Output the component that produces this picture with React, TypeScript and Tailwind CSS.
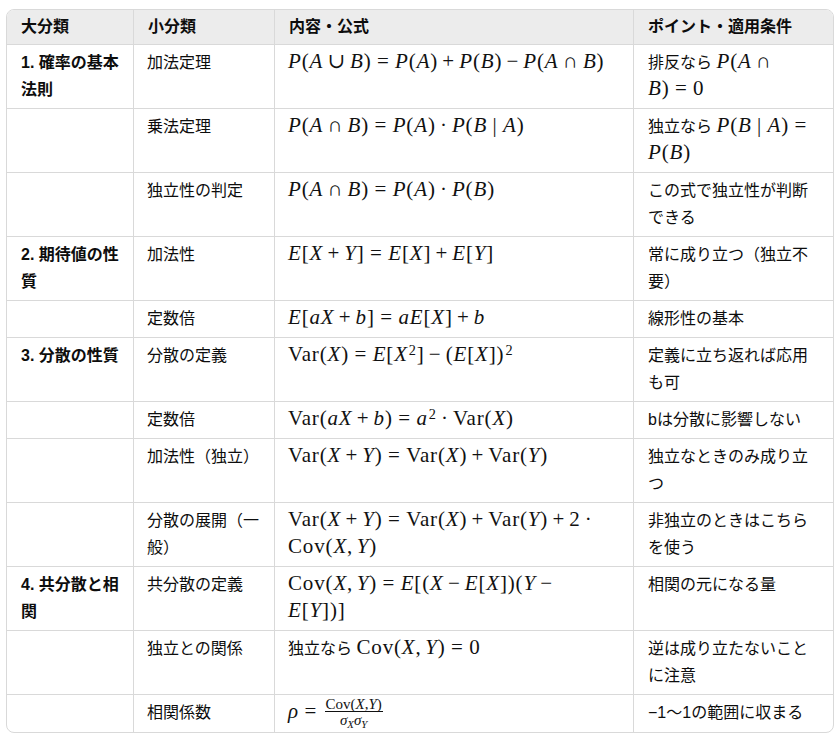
import React from "react";

const M = ({ children }: { children: React.ReactNode }) => (
  <span className="font-['Liberation_Serif','DejaVu_Serif',serif] text-[21px] tracking-[0.04em] leading-none whitespace-nowrap text-[#111]">
    {children}
  </span>
);
const V = ({ children }: { children: React.ReactNode }) => <span className="italic">{children}</span>;
const B = ({ children }: { children: React.ReactNode }) => <span className="mx-[0.2em]">{children}</span>;
const R = ({ children }: { children: React.ReactNode }) => <span className="mx-[0.26em]">{children}</span>;
const Sup = ({ children }: { children: React.ReactNode }) => (
  <sup className="text-[0.68em] ml-[1px] top-[-0.42em]">{children}</sup>
);

const P = ({ children }: { children: React.ReactNode }) => (
  <>
    <V>P</V>({children})
  </>
);
const E = ({ children }: { children: React.ReactNode }) => (
  <>
    <V>E</V>[{children}]
  </>
);
const Var = ({ children }: { children: React.ReactNode }) => <>Var({children})</>;
const Cov = () => (
  <>
    Cov(<V>X</V>,<span className="ml-[0.17em]" />
    <V>Y</V>)
  </>
);

type Row = { c1: React.ReactNode; c2: React.ReactNode; c3: React.ReactNode; c4: React.ReactNode };

const rows: Row[] = [
  {
    c1: <>1. 確率の基本法則</>,
    c2: "加法定理",
    c3: (
      <M>
        <P>
          <V>A</V>
          <B>∪</B>
          <V>B</V>
        </P>
        <R>=</R>
        <P>
          <V>A</V>
        </P>
        <B>+</B>
        <P>
          <V>B</V>
        </P>
        <B>−</B>
        <P>
          <V>A</V>
          <B>∩</B>
          <V>B</V>
        </P>
      </M>
    ),
    c4: (
      <>
        排反なら{" "}
        <M>
          <V>P</V>(<V>A</V>
          <B>∩</B>
        </M>
        <br />
        <M>
          <V>B</V>)<R>=</R>0
        </M>
      </>
    ),
  },
  {
    c1: "",
    c2: "乗法定理",
    c3: (
      <M>
        <P>
          <V>A</V>
          <B>∩</B>
          <V>B</V>
        </P>
        <R>=</R>
        <P>
          <V>A</V>
        </P>
        <B>·</B>
        <P>
          <V>B</V>
          <R>|</R>
          <V>A</V>
        </P>
      </M>
    ),
    c4: (
      <>
        独立なら{" "}
        <M>
          <P>
            <V>B</V>
            <R>|</R>
            <V>A</V>
          </P>
          <R>=</R>
        </M>
        <br />
        <M>
          <P>
            <V>B</V>
          </P>
        </M>
      </>
    ),
  },
  {
    c1: "",
    c2: "独立性の判定",
    c3: (
      <M>
        <P>
          <V>A</V>
          <B>∩</B>
          <V>B</V>
        </P>
        <R>=</R>
        <P>
          <V>A</V>
        </P>
        <B>·</B>
        <P>
          <V>B</V>
        </P>
      </M>
    ),
    c4: "この式で独立性が判断できる",
  },
  {
    c1: <>2. 期待値の性質</>,
    c2: "加法性",
    c3: (
      <M>
        <E>
          <V>X</V>
          <B>+</B>
          <V>Y</V>
        </E>
        <R>=</R>
        <E>
          <V>X</V>
        </E>
        <B>+</B>
        <E>
          <V>Y</V>
        </E>
      </M>
    ),
    c4: "常に成り立つ（独立不要）",
  },
  {
    c1: "",
    c2: "定数倍",
    c3: (
      <M>
        <E>
          <V>aX</V>
          <B>+</B>
          <V>b</V>
        </E>
        <R>=</R>
        <V>a</V>
        <E>
          <V>X</V>
        </E>
        <B>+</B>
        <V>b</V>
      </M>
    ),
    c4: "線形性の基本",
  },
  {
    c1: <>3. 分散の性質</>,
    c2: "分散の定義",
    c3: (
      <M>
        <Var>
          <V>X</V>
        </Var>
        <R>=</R>
        <E>
          <V>X</V>
          <Sup>2</Sup>
        </E>
        <B>−</B>(
        <E>
          <V>X</V>
        </E>
        )<Sup>2</Sup>
      </M>
    ),
    c4: "定義に立ち返れば応用も可",
  },
  {
    c1: "",
    c2: "定数倍",
    c3: (
      <M>
        <Var>
          <V>aX</V>
          <B>+</B>
          <V>b</V>
        </Var>
        <R>=</R>
        <V>a</V>
        <Sup>2</Sup>
        <B>·</B>
        <Var>
          <V>X</V>
        </Var>
      </M>
    ),
    c4: "bは分散に影響しない",
  },
  {
    c1: "",
    c2: "加法性（独立）",
    c3: (
      <M>
        <Var>
          <V>X</V>
          <B>+</B>
          <V>Y</V>
        </Var>
        <R>=</R>
        <Var>
          <V>X</V>
        </Var>
        <B>+</B>
        <Var>
          <V>Y</V>
        </Var>
      </M>
    ),
    c4: "独立なときのみ成り立つ",
  },
  {
    c1: "",
    c2: "分散の展開（一般）",
    c3: (
      <>
        <M>
          <Var>
            <V>X</V>
            <B>+</B>
            <V>Y</V>
          </Var>
          <R>=</R>
          <Var>
            <V>X</V>
          </Var>
          <B>+</B>
          <Var>
            <V>Y</V>
          </Var>
          <B>+</B>2<B>·</B>
        </M>
        <br />
        <M>
          <Cov />
        </M>
      </>
    ),
    c4: "非独立のときはこちらを使う",
  },
  {
    c1: <>4. 共分散と相関</>,
    c2: "共分散の定義",
    c3: (
      <>
        <M>
          <Cov />
          <R>=</R>
          <V>E</V>[(<V>X</V>
          <B>−</B>
          <E>
            <V>X</V>
          </E>
          )(<V>Y</V>
          <B>−</B>
        </M>
        <br />
        <M>
          <E>
            <V>Y</V>
          </E>
          )]
        </M>
      </>
    ),
    c4: "相関の元になる量",
  },
  {
    c1: "",
    c2: "独立との関係",
    c3: (
      <>
        独立なら{" "}
        <M>
          <Cov />
          <R>=</R>0
        </M>
      </>
    ),
    c4: "逆は成り立たないことに注意",
  },
  {
    c1: "",
    c2: "相関係数",
    c3: (
      <M>
        <V>ρ</V>
        <R>=</R>
        <span className="inline-flex flex-col items-center align-middle text-[15px] tracking-normal leading-[14px] mx-[2px] -mt-[2px]">
          <span className="px-[1px]">
            Cov(<V>X</V>,<V>Y</V>)
          </span>
          <span className="block h-px w-full bg-[#111]" />
          <span className="px-[1px] pt-[1px]">
            <V>σ</V>
            <sub className="text-[0.72em] italic">X</sub>
            <V>σ</V>
            <sub className="text-[0.72em] italic">Y</sub>
          </span>
        </span>
      </M>
    ),
    c4: "−1〜1の範囲に収まる",
  },
];

export default function App() {
  const last = rows.length - 1;
  return (
    <div className="min-h-[740px] bg-white pt-[9px] font-['Liberation_Sans','Noto_Sans_CJK_JP',sans-serif] text-[16px] text-[#0d0d0d]">
      <div className="ml-[6px] w-[828px] overflow-hidden rounded-[8px] border border-[#d9d9d9]">
        <div className="grid grid-cols-[127px_141px_359px_199px]">
          {["大分類", "小分類", "内容・公式", "ポイント・適用条件"].map((h, i) => (
            <div
              key={h}
              className={`bg-[#ececec] px-[14px] pt-[4px] pb-[4px] leading-[26px] font-bold border-b border-[#d9d9d9] ${
                i < 3 ? "border-r" : ""
              }`}
            >
              {h}
            </div>
          ))}
          {rows.map((r, ri) => {
            const bb = ri < last ? "border-b" : "";
            return (
              <React.Fragment key={ri}>
                <div className={`pl-[14px] pr-[10px] pt-[4px] pb-[5px] leading-[27px] font-bold border-r border-[#d9d9d9] ${bb}`}>
                  {r.c1}
                </div>
                <div className={`pl-[13px] pr-[10px] pt-[4px] pb-[5px] leading-[27px] border-r border-[#d9d9d9] ${bb}`}>
                  {r.c2}
                </div>
                <div className={`pl-[13px] pr-[10px] pt-[4px] pb-[5px] leading-[27px] border-r border-[#d9d9d9] ${bb}`}>
                  {r.c3}
                </div>
                <div className={`pl-[14px] pr-[13px] pt-[4px] pb-[5px] leading-[27px] border-[#d9d9d9] ${bb}`}>
                  {r.c4}
                </div>
              </React.Fragment>
            );
          })}
        </div>
      </div>
    </div>
  );
}
